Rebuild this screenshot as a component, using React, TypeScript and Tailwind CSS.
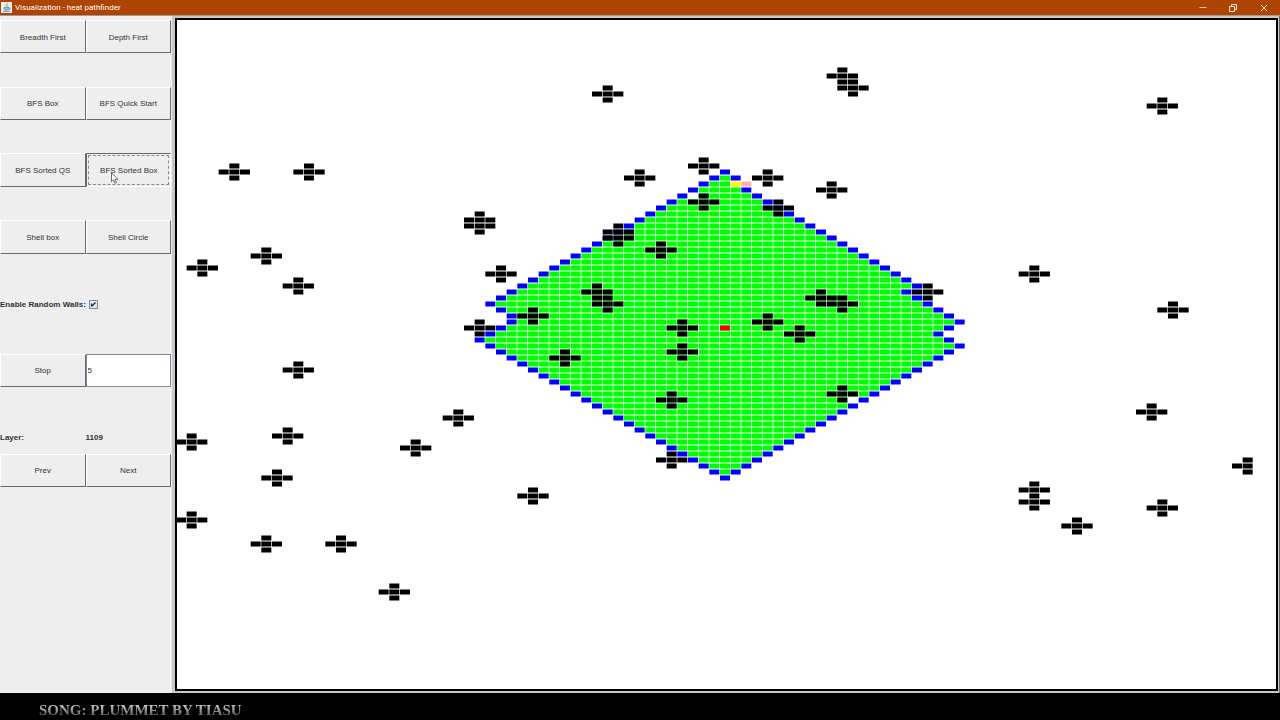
import type { ReactNode } from "react";

type Cell = [number, number];

const WALL_CENTERS: Cell[] = [
  [40, 12], [62, 9], [63, 11], [92, 14], [5, 25], [12, 25], [43, 26], [49, 24],
  [55, 26], [61, 28], [49, 30], [56, 31], [28, 33], [28, 34], [41, 35], [41, 36],
  [45, 38], [30, 42], [8, 39], [2, 41], [11, 44], [39, 45], [40, 47], [33, 49],
  [28, 51], [47, 51], [47, 55], [36, 56], [46, 63], [46, 73], [55, 50], [58, 52],
  [60, 46], [62, 47], [62, 62], [70, 45], [80, 42], [93, 48], [91, 65], [100, 74],
  [80, 78], [80, 80], [84, 84], [92, 81], [11, 58], [26, 66], [10, 69], [22, 71],
  [9, 76], [1, 70], [1, 83], [33, 79], [8, 87], [15, 87], [20, 95],
];
const COLUMNS = 101;
const TOP_ROW = 25;
const BOTTOM_ROW = 76;
const UNVISITED = new Set(["48,29", "63,63"]);

function leftEdge(row: number): number {
  if (row <= 47) return 76 - row;
  if (row >= 53) return row - 25;
  return [30, 31, 31, 30, 29][row - 48];
}

function rightEdge(row: number): number {
  if (row === TOP_ROW) return 51;
  if (row <= 27) return 52;
  if (row <= 44) return row + 25;
  if (row >= 54) return 127 - row;
  return [68, 69, 70, 71, 72, 73, 72, 71, 72][row - 45];
}

const visited: Cell[] = [];
const frontier: Cell[] = [];
for (let row = TOP_ROW; row <= BOTTOM_ROW; row++) {
  const left = leftEdge(row);
  const right = rightEdge(row);
  frontier.push([left, row]);
  if (right !== left && row !== 27) frontier.push([right, row]);
  for (let col = left + 1; col < right; col++) {
    if (!UNVISITED.has(`${col},${row}`)) visited.push([col, row]);
  }
}

const walls: Cell[] = WALL_CENTERS.flatMap(([c, r]): Cell[] => [
  [c, r], [c - 1, r], [c + 1, r], [c, r - 1], [c, r + 1],
]).filter(([c]) => c < COLUMNS);

function toPath(cells: Cell[]): string {
  return cells.map(([c, r]) => `M${c * 16} ${r * 9 + 0.25}h15v7.5h-15z`).join("");
}

function PathGrid() {
  return (
    <svg
      role="img"
      aria-label="Pathfinder grid"
      viewBox="0 1 1650 1004"
      preserveAspectRatio="xMinYMin meet"
      className="-ml-px block w-[calc(100%+1px)]"
    >
      <path fill="#00ff00" d={toPath(visited)} />
      <path fill="#0000ff" d={toPath(frontier)} />
      <path fill="#000" d={toPath(walls)} />
      <path fill="#ff0000" d={toPath([[51, 51]])} />
      <path fill="#ffff00" d={toPath([[52, 27]])} />
      <path fill="#ffafaf" d={toPath([[53, 27]])} />
    </svg>
  );
}

function Spacer() {
  return <div className="col-span-2" />;
}

function SwingButton({ children, pressed = false }: { children: ReactNode; pressed?: boolean }) {
  if (pressed) {
    return (
      <button
        type="button"
        aria-pressed="true"
        className="border border-t-[#696969] border-r-white border-b-white border-l-[#696969] bg-[#eeeeee] p-px text-[#333]"
      >
        <span className="flex h-full items-center justify-center border border-dashed border-[#8a8a8a] pt-[2px] pl-px">
          {children}
        </span>
      </button>
    );
  }
  return (
    <button
      type="button"
      className="border border-t-white border-r-[#696969] border-b-[#696969] border-l-white bg-[#eeeeee] pt-[2px] text-[#333]"
    >
      {children}
    </button>
  );
}

function CoffeeIcon() {
  return (
    <svg viewBox="0 0 11 11" className="size-[11px]" aria-hidden="true">
      <rect width="11" height="11" fill="#e9eef2" />
      <path d="M6 1c1 1-2 2-1 3.500M7.200 2.500c-1.500.8-1 1.300-.8 2.300" stroke="#e58a3c" fill="none" />
      <path d="M3 5.500h5v1.500c0 1-5 1-5 0zM8 6h1v1l-1 .5" stroke="#5b88ab" strokeWidth=".8" fill="#a9c3d6" />
      <path d="M2 9.200h7" stroke="#5b88ab" />
    </svg>
  );
}

function TitleBar() {
  return (
    <header className="flex h-[15px] shrink-0 items-center bg-[#ad4402] text-white">
      <div className="flex items-center gap-[3px] pl-px">
        <CoffeeIcon />
        <h1 className="font-[Roboto,sans-serif] text-[8px] leading-[10px]">Visualization - heat pathfinder</h1>
      </div>
      <div className="ml-auto flex">
        <button type="button" aria-label="Minimize" className="flex h-[14px] w-[30px] items-center justify-center">
          <svg viewBox="0 0 8 8" className="size-2"><path d="M.5 3.500h7" stroke="#f0c8ab" /></svg>
        </button>
        <button type="button" aria-label="Restore" className="flex h-[14px] w-[30px] items-center justify-center">
          <svg viewBox="0 0 8 8" className="size-2" fill="none" stroke="#fbe6d8">
            <path d="M.5 2.500h5v5h-5zM2.500 2.500V.5h5v5h-2" />
          </svg>
        </button>
        <button type="button" aria-label="Close" className="flex h-[14px] w-8 items-center justify-center">
          <svg viewBox="0 0 8 8" className="size-2"><path d="M1 1l6 6M7 1L1 7" stroke="#fbe6d8" /></svg>
        </button>
      </div>
    </header>
  );
}

function ControlPanel() {
  return (
    <aside className="w-[171px] shrink-0 bg-[#eeeeee] pt-1 text-[8px] leading-[10px] text-[#333]">
      <div className="relative grid h-[467px] grid-cols-2 grid-rows-[repeat(14,minmax(0,1fr))]">
        <SwingButton>Breadth First</SwingButton>
        <SwingButton>Depth First</SwingButton>
        <Spacer />
        <SwingButton>BFS Box</SwingButton>
        <SwingButton>BFS Quick Start</SwingButton>
        <Spacer />
        <SwingButton>BFS Sorted QS</SwingButton>
        <SwingButton pressed>BFS Sorted Box</SwingButton>
        <Spacer />
        <SwingButton>Shell box</SwingButton>
        <SwingButton>Shell Circle</SwingButton>
        <Spacer />
        <label htmlFor="random-walls" className="flex items-center pt-[2px] font-bold whitespace-nowrap">
          Enable Random Walls:
        </label>
        <div className="flex items-center pt-px pl-[3px]">
          <span className="grid">
            <input
              id="random-walls"
              type="checkbox"
              defaultChecked
              className="peer col-start-1 row-start-1 size-[9px] appearance-none border border-[#7a8a99] bg-[#dde8f3]"
            />
            <svg viewBox="0 0 9 9" className="pointer-events-none col-start-1 row-start-1 size-[9px] opacity-0 peer-checked:opacity-100">
              <path d="M2.500 3.500v3M3 6L6.500 2.500" stroke="#222" strokeWidth="1.200" fill="none" />
            </svg>
          </span>
        </div>
        <Spacer />
        <SwingButton>Stop</SwingButton>
        <input
          type="text"
          aria-label="Delay"
          defaultValue="5"
          className="min-w-0 rounded-none border border-[#7a8a99] bg-white px-px pt-[2px] text-[8px] text-[#333]"
        />
        <Spacer />
        <span className="flex items-center pt-[2px] font-bold">Layer:</span>
        <span className="flex items-center pt-[2px] font-bold">1109</span>
        <SwingButton>Prev</SwingButton>
        <SwingButton>Next</SwingButton>
        <svg viewBox="0 0 8 12" aria-hidden="true" className="pointer-events-none absolute top-[152px] left-[111px] h-3 w-2">
          <path d="M.5.700v9l2-1.900 1.400 3.400 1.500-.6L4 7.300h3z" fill="#fff" stroke="#333" strokeWidth=".7" />
        </svg>
      </div>
    </aside>
  );
}

export default function App() {
  return (
    <div className="flex min-h-screen flex-col bg-black font-['Liberation_Sans',Arial,sans-serif]">
      <TitleBar />
      <div className="flex flex-1 border-t border-[#a09a96] bg-[#eeeeee]">
        <ControlPanel />
        <main className="min-w-0 flex-1 border-r border-l border-r-[#696969] border-l-[#eeeeee] bg-[#c8c8c8] pt-[2px] pr-px pb-[2px] pl-[3px]">
          <div className="h-full overflow-hidden border-2 border-black bg-white">
            <PathGrid />
          </div>
        </main>
      </div>
      <footer className="flex h-[27px] shrink-0 items-center bg-black pt-[6px] pl-[39px]">
        <p className="bg-linear-to-b from-[#e8e8e8] to-[#4a4a4a] bg-clip-text font-['Liberation_Serif',serif] text-[15px] leading-4 font-bold text-transparent">
          SONG: PLUMMET BY TIASU
        </p>
      </footer>
    </div>
  );
}
